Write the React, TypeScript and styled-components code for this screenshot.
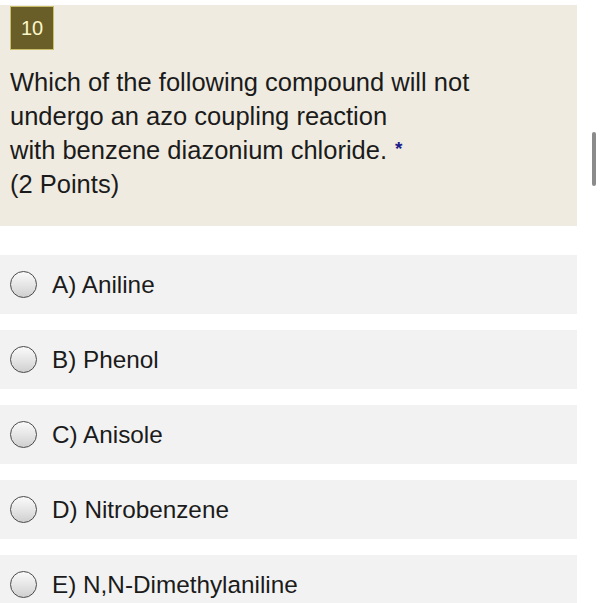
import React from "react";
import styled, { createGlobalStyle } from "styled-components";

const Global = createGlobalStyle`
  html, body { margin: 0; padding: 0; background: #ffffff; }
  body { font-family: "Liberation Sans", Arial, sans-serif; overflow: hidden; }
`;

const Page = styled.div`
  position: relative;
  width: 600px;
  height: 603px;
  padding-top: 5px;
  box-sizing: border-box;
`;

const QuestionCard = styled.div`
  width: 577px;
  height: 221px;
  background: #efebe1;
  box-sizing: border-box;
  padding: 1px 10px 0 10px;
`;

const Badge = styled.div`
  width: 44px;
  height: 44px;
  box-sizing: border-box;
  background: #6a5e28;
  border: 1px solid #c9bf6a;
  color: #fbf6c8;
  font-size: 20px;
  display: flex;
  align-items: center;
  justify-content: center;
`;

const QuestionText = styled.div`
  margin-top: 15px;
  font-size: 25.5px;
  line-height: 34px;
  color: #1b1b1b;
`;

const Required = styled.span`
  color: #1c1c8a;
  font-size: 19px;
  font-weight: bold;
  vertical-align: top;
  margin-left: 8px;
  position: relative;
  top: -1px;
`;

const Options = styled.div`
  margin-top: 29px;
  display: flex;
  flex-direction: column;
  gap: 16px;
`;

const OptionRow = styled.label`
  width: 577px;
  height: 59px;
  background: #f2f2f2;
  display: flex;
  align-items: center;
  gap: 15px;
  padding-left: 10px;
  box-sizing: border-box;
`;

const Radio = styled.span`
  width: 27px;
  height: 27px;
  border-radius: 50%;
  box-sizing: border-box;
  border: 1.5px solid #4a4a4a;
  background: linear-gradient(180deg, #fafafa 0%, #e2e2e2 60%, #cfcfcf 100%);
  flex-shrink: 0;
`;

const OptionLabel = styled.span`
  font-size: 24.3px;
  color: #1b1b1b;
`;

const Scrollbar = styled.div`
  position: absolute;
  left: 592px;
  top: 132px;
  width: 4px;
  height: 54px;
  border-radius: 2px;
  background: #8b8b8b;
`;

const options = [
  "A) Aniline",
  "B) Phenol",
  "C) Anisole",
  "D) Nitrobenzene",
  "E) N,N-Dimethylaniline",
];

export default function App() {
  return (
    <Page>
      <Global />
      <QuestionCard>
        <Badge>10</Badge>
        <QuestionText>
          Which of the following compound will not
          <br />
          undergo an azo coupling reaction
          <br />
          with benzene diazonium chloride.<Required>*</Required>
          <br />
          (2 Points)
        </QuestionText>
      </QuestionCard>
      <Options>
        {options.map((o) => (
          <OptionRow key={o}>
            <Radio />
            <OptionLabel>{o}</OptionLabel>
          </OptionRow>
        ))}
      </Options>
      <Scrollbar />
    </Page>
  );
}
